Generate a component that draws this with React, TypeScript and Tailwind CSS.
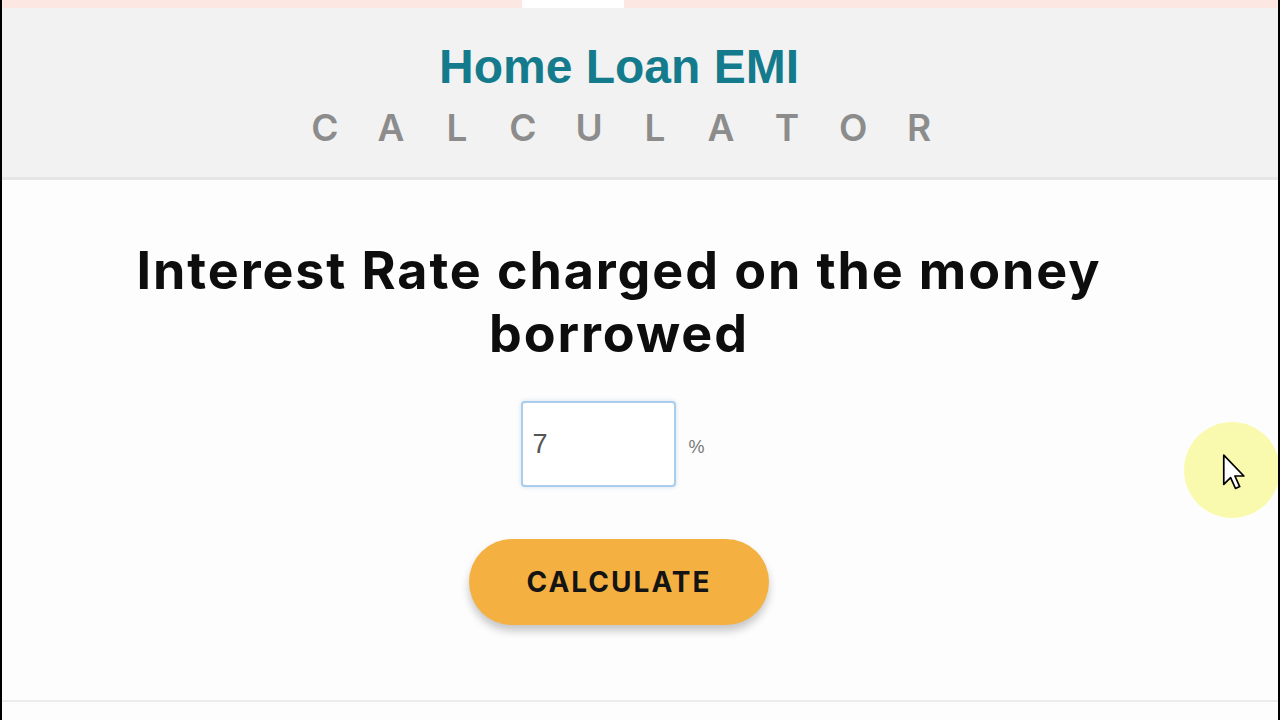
const letters = "CALCULATOR".split("");

export default function App() {
  return (
    <div className="relative h-[720px] w-[1280px] overflow-hidden border-x-2 border-black bg-[#fdfdfd]">
      {/* top strip */}
      <div className="flex h-[8px]">
        <div className="w-[520px] bg-[#fde7e2]" />
        <div className="w-[102px] bg-white" />
        <div className="flex-1 bg-[#fde7e2]" />
      </div>

      {/* header */}
      <header className="flex h-[172px] flex-col items-center border-b-[3px] border-[#e6e6e6] bg-[#f2f2f2] pr-[42px]">
        <h1 className="mt-[30px] font-['Liberation_Sans',Arial,sans-serif] text-[48px] font-bold leading-[58px] text-[#147b8d]">
          Home Loan EMI
        </h1>
        <div className="mt-[10px] ml-[6px] flex gap-[38px] font-['Inter',sans-serif] text-[37px] font-semibold leading-[44px] text-[#8c8c8c]">
          {letters.map((l, i) => (
            <span key={i} className="w-[28px] text-center">
              {l}
            </span>
          ))}
        </div>
      </header>

      {/* body */}
      <main className="flex h-[522px] flex-col items-center border-b-2 border-[#ececec] pr-[42px]">
        <h2 className="mt-[59px] w-[1040px] text-center font-['Inter',sans-serif] text-[52px] font-bold leading-[63px] tracking-[1.9px] text-[#0d0d0d]">
          Interest Rate charged on the money borrowed
        </h2>

        <div className="mt-[36px] mr-[12px] flex items-center gap-[12px]">
          <div className="flex h-[86px] w-[155px] items-center rounded-[4px] border-2 border-[#a9cdea] bg-white px-[9px] shadow-[0_0_4px_rgba(120,170,220,0.35)]">
            <span className="font-['Liberation_Sans',Arial,sans-serif] text-[27px] text-[#555555]">7</span>
          </div>
          <span className="mt-[6px] font-['Liberation_Sans',Arial,sans-serif] text-[18px] text-[#7a7a7a]">%</span>
        </div>

        <button
          type="button"
          className="mt-[52px] flex h-[86px] w-[300px] items-center justify-center rounded-full bg-[#f4b142] font-['Inter',sans-serif] text-[28px] font-bold tracking-[2px] text-[#141414] shadow-[0_6px_8px_rgba(0,0,0,0.22)]"
        >
          CALCULATE
        </button>
      </main>

      {/* cursor highlight */}
      <div className="absolute left-[1182px] top-[422px] h-[96px] w-[96px] rounded-full bg-[#f9f99a]/80" />
      <svg
        className="absolute left-[1220px] top-[454px]"
        width="24"
        height="36"
        viewBox="0 0 12 19"
      >
        <path
          d="M0.6 0.6 L0.6 16 L4.2 12.5 L6.8 18.2 L9 17.2 L6.5 11.6 L11.2 11.6 Z"
          fill="white"
          stroke="black"
          strokeWidth="0.9"
          strokeLinejoin="round"
        />
      </svg>
    </div>
  );
}
